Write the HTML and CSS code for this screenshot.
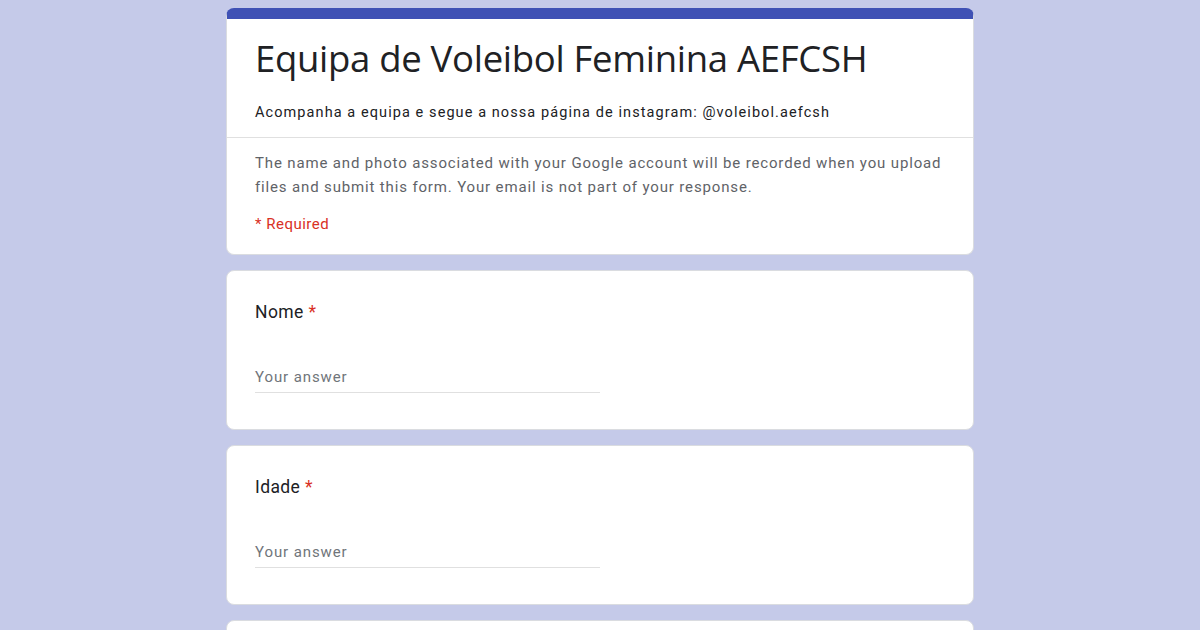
FILE: index.html
```html
<!DOCTYPE html>
<html lang="pt">
<head>
<meta charset="utf-8">
<title>Equipa de Voleibol Feminina AEFCSH</title>
<link rel="stylesheet" href="styles.css">
</head>
<body>
<div class="page">
  <div class="card header-card">
    <div class="header-top">
      <h1 class="title">Equipa de Voleibol Feminina AEFCSH</h1>
      <div class="subtitle">Acompanha a equipa e segue a nossa página de instagram: @voleibol.aefcsh</div>
    </div>
    <div class="header-bottom">
      <div class="notice">The name and photo associated with your Google account will be recorded when you upload files and submit this form. Your email is not part of your response.</div>
      <div class="required">* Required</div>
    </div>
  </div>

  <div class="card question">
    <div class="q-label">Nome <span class="star">*</span></div>
    <div class="answer">Your answer</div>
  </div>

  <div class="card question">
    <div class="q-label">Idade <span class="star">*</span></div>
    <div class="answer">Your answer</div>
  </div>

  <div class="card question"></div>
</div>
</body>
</html>
```

FILE: styles.css
```css
html, body {
  margin: 0;
  padding: 0;
}
body {
  background: #c5cae9;
  font-family: Roboto, "Liberation Sans", sans-serif;
  height: 630px;
  overflow: hidden;
}
.page {
  width: 748px;
  margin: 0 auto;
  padding-top: 8px;
  display: flex;
  flex-direction: column;
  gap: 15px;
}
.card {
  background: #fff;
  border-radius: 8px;
  border: 1px solid #dadce0;
  box-sizing: border-box;
}
.header-card {
  border-top: 11px solid #3f51b5;
}
.header-top {
  padding: 15px 28px 14px;
  border-bottom: 1px solid #e0e0e0;
}
.title {
  margin: 0;
  font-family: "Open Sans", sans-serif;
  font-weight: 400;
  font-size: 36.5px;
  line-height: 48px;
  color: #202124;
  letter-spacing: -0.3px;
}
.subtitle {
  margin-top: 21px;
  font-size: 14.5px;
  line-height: 20px;
  color: #202124;
  letter-spacing: 1.08px;
}
.header-bottom {
  padding: 13px 28px 18px;
}
.notice {
  font-size: 15px;
  line-height: 24px;
  color: #5f6368;
  letter-spacing: 0.85px;
}
.required {
  margin-top: 13px;
  font-size: 15px;
  line-height: 24px;
  color: #d93025;
  letter-spacing: 0.5px;
}
.question {
  padding: 29px 28px 37px;
  height: 160px;
}
.q-label {
  font-size: 17.5px;
  line-height: 24px;
  color: #202124;
  letter-spacing: 0.4px;
}
.star {
  color: #d93025;
}
.answer {
  margin-top: 41px;
  width: 345px;
  font-size: 15px;
  line-height: 24px;
  color: #70757a;
  letter-spacing: 0.9px;
  padding-bottom: 3px;
  border-bottom: 1px solid #e0e0e0;
}
```
